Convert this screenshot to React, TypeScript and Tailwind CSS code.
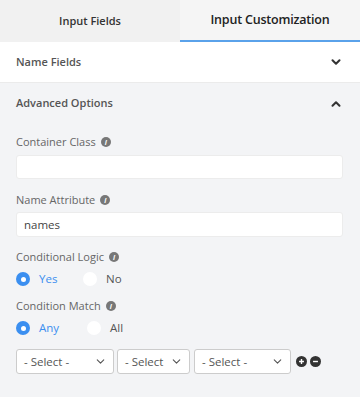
import { ChevronDown, ChevronUp } from "lucide-react";

function Info() {
  return (
    <span className="ml-[5px] inline-flex h-[10px] w-[10px] items-center justify-center rounded-full bg-[#777] text-[7px] font-bold italic leading-none text-white">
      i
    </span>
  );
}

function Label({ children }: { children: React.ReactNode }) {
  return (
    <div className="flex h-[16px] items-center text-[11px] leading-[16px] text-[#666]">
      {children}
      <Info />
    </div>
  );
}

function Radio({ label, checked }: { label: string; checked?: boolean }) {
  return (
    <div className="flex h-[16px] items-center gap-[9px]">
      {checked ? (
        <span className="flex h-[14px] w-[14px] items-center justify-center rounded-full bg-[#3b8ff0]">
          <span className="h-[5px] w-[5px] rounded-full bg-white" />
        </span>
      ) : (
        <span className="h-[14px] w-[14px] rounded-full bg-white" />
      )}
      <span className={`text-[11.5px] leading-[16px] ${checked ? "text-[#3b8ff0]" : "font-medium text-[#555]"}`}>{label}</span>
    </div>
  );
}

function Select({ w, label }: { w: string; label: string }) {
  return (
    <div className={`flex h-[25px] items-center justify-between rounded-[3px] border border-[#ccc] bg-white pl-[7px] pr-[6px] text-[11.5px] leading-none text-[#555] ${w}`}>
      <span className="whitespace-nowrap">{label}</span>
      <ChevronDown className="h-[13px] w-[13px] text-[#555]" strokeWidth={2} />
    </div>
  );
}

export default function App() {
  return (
    <div className="h-[397px] w-[360px] bg-[#f3f4f6]" style={{ fontFamily: '"Open Sans", sans-serif' }}>
      {/* Tabs */}
      <div className="flex h-[42px]">
        <div className="flex w-[180px] items-center justify-center bg-[#f1f1f1] text-[11px] font-semibold text-[#333]">
          Input Fields
        </div>
        <div className="flex w-[180px] items-center justify-center border-b-2 border-[#5aa2ea] bg-[#f5f5f5] text-[12.5px] font-semibold tracking-[-0.2px] text-[#222]">
          Input Customization
        </div>
      </div>

      {/* Name Fields */}
      <div className="flex h-[40px] items-center justify-between bg-white pl-[16px] pr-[17px]">
        <span className="text-[11px] font-semibold text-[#555]">Name Fields</span>
        <ChevronDown className="h-[14px] w-[14px] text-[#333]" strokeWidth={3.5} />
      </div>

      {/* Advanced Options */}
      <div className="flex h-[42px] items-center justify-between border-t border-[#ebebeb] pl-[16px] pr-[17px]">
        <span className="text-[11px] font-semibold text-[#555]">Advanced Options</span>
        <ChevronUp className="h-[14px] w-[14px] text-[#333]" strokeWidth={3.5} />
      </div>

      <div className="flex flex-col px-[16px] pt-[10px]">
        <Label>Container Class</Label>
        <div className="mt-[5px] h-[24px] w-[327px] rounded-[3px] border border-[#ececec] bg-white" />

        <div className="mt-[13px]">
          <Label>Name Attribute</Label>
        </div>
        <div className="mt-[4px] flex h-[25px] w-[327px] items-center rounded-[3px] border border-[#ececec] bg-white pl-[7px] text-[11.5px] text-[#444]">
          names
        </div>

        <div className="mt-[12px]">
          <Label>Conditional Logic</Label>
        </div>
        <div className="mt-[6px] flex items-center">
          <div className="w-[67px]">
            <Radio label="Yes" checked />
          </div>
          <Radio label="No" />
        </div>

        <div className="mt-[11px]">
          <Label>Condition Match</Label>
        </div>
        <div className="mt-[6px] flex items-center">
          <div className="w-[71px]">
            <Radio label="Any" checked />
          </div>
          <Radio label="All" />
        </div>

        <div className="mt-[13px] flex items-center">
          <Select w="w-[98px]" label="- Select -" />
          <div className="ml-[3px]">
            <Select w="w-[73px]" label="- Select" />
          </div>
          <div className="ml-[4px]">
            <Select w="w-[97px]" label="- Select -" />
          </div>
          <div className="ml-[5px] flex items-center gap-[3px]">
            <span className="flex h-[11px] w-[11px] items-center justify-center rounded-full bg-[#333]">
              <svg viewBox="0 0 10 10" className="h-[7px] w-[7px]"><path d="M5 1.5v7M1.5 5h7" stroke="white" strokeWidth="2" /></svg>
            </span>
            <span className="flex h-[11px] w-[11px] items-center justify-center rounded-full bg-[#333]">
              <svg viewBox="0 0 10 10" className="h-[7px] w-[7px]"><path d="M1.5 5h7" stroke="white" strokeWidth="2" /></svg>
            </span>
          </div>
        </div>
      </div>
    </div>
  );
}
